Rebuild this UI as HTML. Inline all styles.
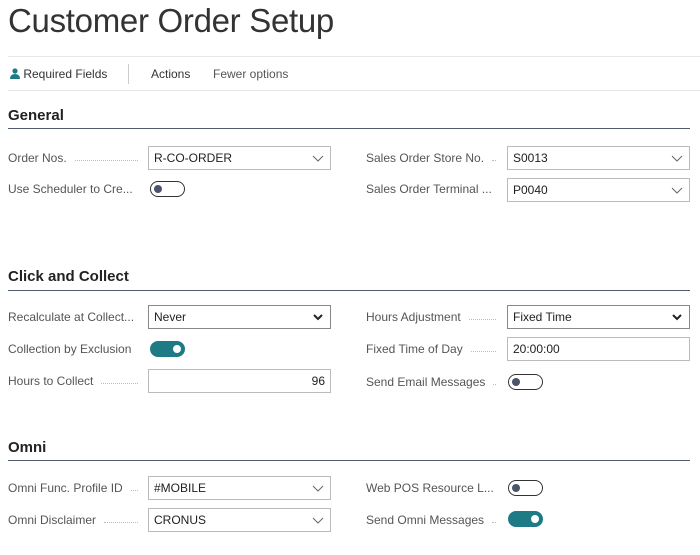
<!DOCTYPE html>
<html><head><meta charset="utf-8"><style>
body{margin:0;width:700px;height:555px;background:#fff;font-family:"Liberation Sans",sans-serif;position:relative;overflow:hidden;color:#212121}
.a{position:absolute}
.t{left:8px;top:2px;font-size:33px;color:#333;font-weight:300;letter-spacing:-0.3px}
.hl{left:8px;width:692px;height:1px;background:#e6e6e6}
.tb{top:67px;font-size:12px;color:#333}
.h{left:8px;font-size:15px;font-weight:bold;color:#222}
.hr{left:8px;width:682px;height:1px;background:#505c6d}
.lab{font-size:12px;color:#555;display:flex;align-items:center;height:24px;width:134px;white-space:nowrap;overflow:hidden}
.lab span.d{flex:1;border-bottom:1px dotted #bbb;margin:0 4px 0 8px;height:0;transform:translateY(2px)}
.f{height:22px;border:1px solid #bbb;font-size:12px;line-height:22px;padding:0 5px;box-sizing:content-box;width:171px}
.chev{position:absolute;right:6px;top:5px;width:12px;height:12px}
.tg{width:33px;height:14px;border:1.5px solid #333;border-radius:9px;box-sizing:content-box}
.tg i{position:absolute;left:3px;top:3px;width:8px;height:8px;border-radius:50%;background:#4a5568}
.on{background:#1e7a84;border-color:#1e7a84}
.on i{left:22px;background:#fff}
</style></head><body>
<div class="a t">Customer Order Setup</div>
<div class="a hl" style="top:56px"></div>
<div class="a tb" style="left:10px"><svg width="10" height="11" viewBox="0 0 10 11" style="vertical-align:-1px"><circle cx="5" cy="3" r="2.6" fill="#1e7a84"/><path d="M0 11 Q0 6 5 6 Q10 6 10 11Z" fill="#1e7a84"/></svg> Required Fields</div>
<div class="a" style="left:128px;top:64px;width:1px;height:20px;background:#ccc"></div>
<div class="a tb" style="left:151px">Actions</div>
<div class="a tb" style="left:213px;color:#555">Fewer options</div>
<div class="a hl" style="top:90px"></div>

<div class="a h" style="top:107px">General</div>
<div class="a hr" style="top:128px"></div>
<div class="a lab" style="left:8px;top:146px">Order Nos.<span class="d"></span></div>
<div class="a f" style="left:148px;top:146px">R-CO-ORDER<svg class="chev" viewBox="0 0 12 12"><path d="M1 4l5 5 5-5" fill="none" stroke="#666" stroke-width="1"/></svg></div>
<div class="a lab" style="left:8px;top:177px">Use Scheduler to Cre...<span class="d"></span></div>
<div class="a tg" style="left:150px;top:181px"><i></i></div>
<div class="a lab" style="left:366px;top:146px">Sales Order Store No.<span class="d"></span></div>
<div class="a f" style="left:507px;top:146px">S0013<svg class="chev" viewBox="0 0 12 12"><path d="M1 4l5 5 5-5" fill="none" stroke="#666" stroke-width="1"/></svg></div>
<div class="a lab" style="left:366px;top:177px">Sales Order Terminal ...<span class="d"></span></div>
<div class="a f" style="left:507px;top:178px">P0040<svg class="chev" viewBox="0 0 12 12"><path d="M1 4l5 5 5-5" fill="none" stroke="#666" stroke-width="1"/></svg></div>

<div class="a h" style="top:268px">Click and Collect</div>
<div class="a hr" style="top:290px"></div>
<div class="a lab" style="left:8px;top:305px">Recalculate at Collect...<span class="d"></span></div>
<div class="a f" style="left:148px;top:305px;border-color:#888">Never<svg class="chev" viewBox="0 0 12 12"><path d="M2 4l4 4 4-4" fill="none" stroke="#222" stroke-width="2"/></svg></div>
<div class="a lab" style="left:8px;top:337px">Collection by Exclusion<span class="d"></span></div>
<div class="a tg on" style="left:150px;top:341px"><i></i></div>
<div class="a lab" style="left:8px;top:369px">Hours to Collect<span class="d"></span></div>
<div class="a f" style="left:148px;top:369px;text-align:right">96</div>
<div class="a lab" style="left:366px;top:305px">Hours Adjustment<span class="d"></span></div>
<div class="a f" style="left:507px;top:305px;border-color:#888">Fixed Time<svg class="chev" viewBox="0 0 12 12"><path d="M2 4l4 4 4-4" fill="none" stroke="#222" stroke-width="2"/></svg></div>
<div class="a lab" style="left:366px;top:337px">Fixed Time of Day<span class="d"></span></div>
<div class="a f" style="left:507px;top:337px">20:00:00</div>
<div class="a lab" style="left:366px;top:370px">Send Email Messages<span class="d"></span></div>
<div class="a tg" style="left:508px;top:374px"><i></i></div>

<div class="a h" style="top:439px">Omni</div>
<div class="a hr" style="top:460px"></div>
<div class="a lab" style="left:8px;top:476px">Omni Func. Profile ID<span class="d"></span></div>
<div class="a f" style="left:148px;top:476px">#MOBILE<svg class="chev" viewBox="0 0 12 12"><path d="M1 4l5 5 5-5" fill="none" stroke="#666" stroke-width="1"/></svg></div>
<div class="a lab" style="left:8px;top:508px">Omni Disclaimer<span class="d"></span></div>
<div class="a f" style="left:148px;top:508px">CRONUS<svg class="chev" viewBox="0 0 12 12"><path d="M1 4l5 5 5-5" fill="none" stroke="#666" stroke-width="1"/></svg></div>
<div class="a lab" style="left:366px;top:476px">Web POS Resource L...<span class="d"></span></div>
<div class="a tg" style="left:508px;top:480px"><i></i></div>
<div class="a lab" style="left:366px;top:508px">Send Omni Messages<span class="d"></span></div>
<div class="a tg on" style="left:508px;top:511px"><i></i></div>
</body></html>
